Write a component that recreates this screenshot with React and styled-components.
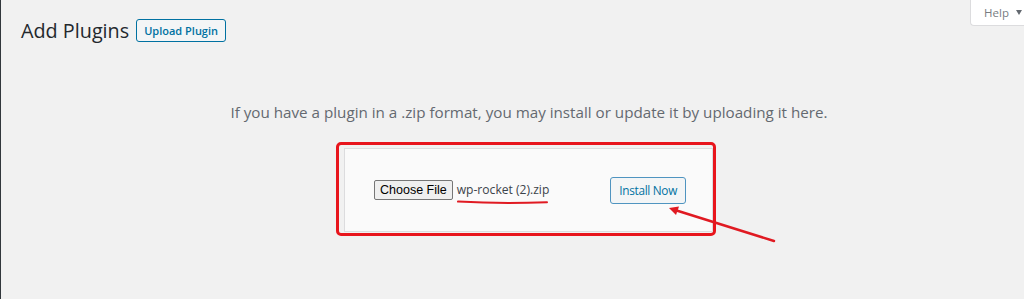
import React from "react";
import styled, { createGlobalStyle } from "styled-components";

const GlobalStyle = createGlobalStyle`
  html, body {
    margin: 0;
    padding: 0;
    background: #f1f1f1;
    font-family: "Open Sans", "Noto Sans", sans-serif;
    color: #3c434a;
  }
  #root {
    width: 1024px;
    height: 299px;
    overflow: hidden;
  }
`;

const Page = styled.div`
  display: flex;
  width: 1024px;
  height: 299px;
`;

const AdminEdge = styled.div`
  width: 1px;
  flex: none;
  background: #32373c;
`;

const Main = styled.div`
  flex: 1;
  min-width: 0;
`;

const HelpTab = styled.button`
  float: right;
  display: flex;
  align-items: center;
  gap: 7px;
  height: 26px;
  padding: 0 2px 1px 13px;
  margin: 0;
  background: #fff;
  border: 1px solid #dcdcde;
  border-top: none;
  border-right: none;
  border-radius: 0 0 0 4px;
  font-family: "Open Sans", "Noto Sans", sans-serif;
  font-size: 11.5px;
  color: #787c82;
  box-sizing: border-box;
  white-space: nowrap;
  cursor: pointer;
`;

const Caret = styled.span`
  width: 0;
  height: 0;
  border-left: 3.5px solid transparent;
  border-right: 3.5px solid transparent;
  border-top: 5px solid #646970;
`;

const TitleRow = styled.div`
  display: flex;
  align-items: center;
  gap: 7px;
  padding: 16px 0 0 20px;
`;

const Title = styled.h1`
  margin: 0;
  font-size: 19.8px;
  font-weight: 400;
  line-height: 29px;
  color: #23282d;
`;

const OutlineButton = styled.button`
  height: 23px;
  padding: 0 7px;
  margin: 0;
  background: #f3f5f6;
  border: 1px solid ${(p) => (p.$muted ? "#4f94c0" : "#0071a1")};
  border-radius: 3px;
  color: #0071a1;
  font-family: "Open Sans", "Noto Sans", sans-serif;
  font-size: ${(p) => p.$size || 11}px;
  font-weight: ${(p) => p.$weight || 400};
  letter-spacing: ${(p) => p.$tight || 0}px;
  box-sizing: border-box;
  cursor: pointer;
  white-space: nowrap;
`;

const Content = styled.div`
  padding-left: 33px;
  display: flex;
  flex-direction: column;
  align-items: center;
`;

const Description = styled.p`
  margin: 57px 0 0;
  font-size: 15.2px;
  line-height: 20px;
  color: #646970;
  white-space: nowrap;
`;

const RedFrame = styled.div`
  position: relative;
  margin: 20px 6px 0 0;
  border: 3px solid #e8151c;
  border-radius: 5px;
  padding: 3px 0 1px 5px;
`;

const UploadBox = styled.div`
  width: 369px;
  height: 84px;
  box-sizing: border-box;
  border: 1px solid #dcdcde;
  background: #fafafa;
  display: flex;
  align-items: center;
  justify-content: space-between;
  padding: 0 26px 0 29px;
`;

const FileField = styled.div`
  display: flex;
  align-items: center;
  gap: 4px;
`;

const ChooseButton = styled.button`
  height: 20px;
  padding: 0 5px;
  margin: 0;
  background: #efefef;
  border: 1px solid #767676;
  border-radius: 2px;
  font-family: "Liberation Sans", Arial, sans-serif;
  font-size: 12.5px;
  color: #000;
  box-sizing: border-box;
  cursor: pointer;
`;

const FileName = styled.span`
  position: relative;
  font-size: 12.1px;
  color: #3c434a;
  line-height: 20px;
`;

const Underline = styled.svg`
  position: absolute;
  left: 0;
  top: 21px;
  overflow: visible;
`;

const InstallButton = styled(OutlineButton)`
  height: 27px;
  padding: 0 8px;
`;

const Arrow = styled.svg`
  position: absolute;
  left: 0;
  top: 0;
  overflow: visible;
  pointer-events: none;
`;

export default function App() {
  // frame outer top-left sits at page (336, 143)
  const ox = 336;
  const oy = 143;
  const tip = { x: 666 - ox, y: 206 - oy };
  const tail = { x: 771 - ox, y: 239 - oy };
  return (
    <>
      <GlobalStyle />
      <Page>
        <AdminEdge />
        <Main>
          <HelpTab>
            Help <Caret />
          </HelpTab>
          <TitleRow>
            <Title>Add Plugins</Title>
            <OutlineButton $weight={600}>Upload Plugin</OutlineButton>
          </TitleRow>
          <Content>
            <Description>
              If you have a plugin in a .zip format, you may install or update
              it by uploading it here.
            </Description>
            <RedFrame>
              <UploadBox>
                <FileField>
                  <ChooseButton>Choose File</ChooseButton>
                  <FileName>
                    wp-rocket (2).zip
                    <Underline width="92" height="4">
                      <path
                        d="M1 0.6 Q 45 3 90 1.2"
                        fill="none"
                        stroke="#e01a22"
                        strokeWidth="2"
                        strokeLinecap="round"
                      />
                    </Underline>
                  </FileName>
                </FileField>
                <InstallButton $muted $size={11.8} $tight={-0.3}>
                  Install Now
                </InstallButton>
              </UploadBox>
              <Arrow width="1" height="1">
                <line
                  x1={tail.x}
                  y1={tail.y}
                  x2={tip.x + 6}
                  y2={tip.y + 2}
                  stroke="#e01a22"
                  strokeWidth="2.5"
                  strokeLinecap="round"
                />
                <polygon
                  points={`${tip.x},${tip.y} ${tip.x + 10},${tip.y - 1.5} ${tip.x + 7},${tip.y + 7}`}
                  fill="#e01a22"
                />
              </Arrow>
            </RedFrame>
          </Content>
        </Main>
      </Page>
    </>
  );
}
